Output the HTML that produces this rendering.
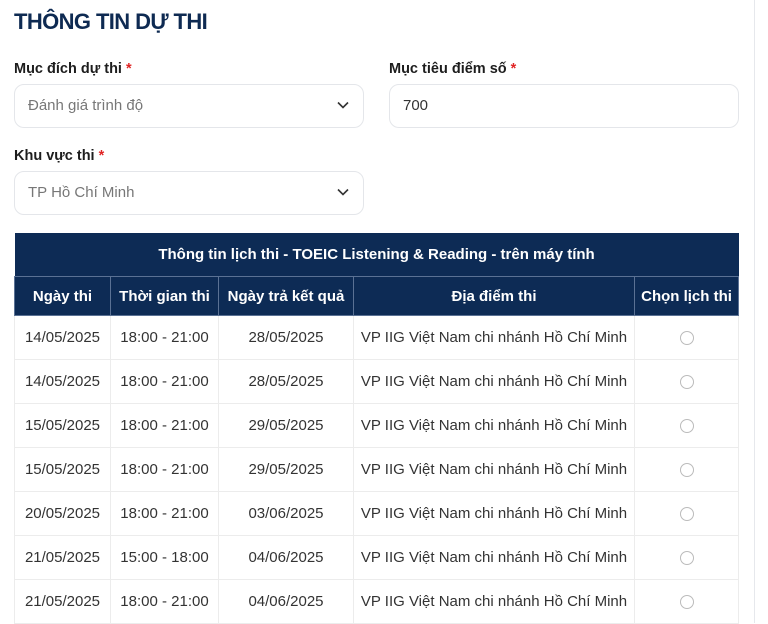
<!DOCTYPE html>
<html><head><meta charset="utf-8"><style>
body{margin:0;width:768px;height:623px;overflow:hidden;background:#fff;font-family:"Liberation Sans",sans-serif;position:relative}
.vl{position:absolute;left:754px;top:0;width:1px;height:623px;background:#e6e8ec}
h1{position:absolute;left:14px;top:9px;margin:0;font-size:22px;color:#0e2a52;font-weight:bold;letter-spacing:-0.6px}
.lab{position:absolute;font-size:14.5px;font-weight:bold;color:#1d1d1d}
.lab b{color:#e02424}
.inp{position:absolute;height:44px;border:1px solid #e4e6ea;border-radius:10px;box-sizing:border-box;font-size:15px;color:#777;padding:0 13px;line-height:42px}
.inp svg{position:absolute;right:14px;top:16px}
table{position:absolute;left:14px;top:233px;width:724px;border-collapse:collapse;font-size:15px;table-layout:fixed}
th{background:#0d2b55;color:#fff;font-weight:bold;height:38px;border:1px solid #5a7194;padding:0}
th.t{height:43px;border:none}
td{height:43px;border:1px solid #ececec;text-align:center;color:#333;padding:0;white-space:nowrap}
.r{display:inline-block;width:12px;height:12px;border:1px solid #bbb;border-radius:50%;vertical-align:middle}
</style></head><body>
<div class="vl"></div>
<h1>THÔNG TIN DỰ THI</h1>
<div class="lab" style="left:14px;top:61px">Mục đích dự thi <b>*</b></div>
<div class="lab" style="left:389px;top:61px">Mục tiêu điểm số <b>*</b></div>
<div class="inp" style="left:14px;top:84px;width:350px">Đánh giá trình độ<svg width="12" height="8" viewBox="0 0 12 8"><path d="M1 1.5l5 5 5-5" fill="none" stroke="#333" stroke-width="1.6"/></svg></div>
<div class="inp" style="left:389px;top:84px;width:350px;color:#333">700</div>
<div class="lab" style="left:14px;top:148px">Khu vực thi <b>*</b></div>
<div class="inp" style="left:14px;top:171px;width:350px">TP Hồ Chí Minh<svg width="12" height="8" viewBox="0 0 12 8"><path d="M1 1.5l5 5 5-5" fill="none" stroke="#333" stroke-width="1.6"/></svg></div>
<table>
<colgroup><col style="width:96px"><col style="width:108px"><col style="width:135px"><col style="width:281px"><col style="width:104px"></colgroup>
<tr><th class="t" colspan="5">Thông tin lịch thi - TOEIC Listening &amp; Reading - trên máy tính</th></tr>
<tr><th>Ngày thi</th><th>Thời gian thi</th><th>Ngày trả kết quả</th><th>Địa điểm thi</th><th>Chọn lịch thi</th></tr>
<tr><td>14/05/2025</td><td>18:00 - 21:00</td><td>28/05/2025</td><td>VP IIG Việt Nam chi nhánh Hồ Chí Minh</td><td><span class="r"></span></td></tr>
<tr><td>14/05/2025</td><td>18:00 - 21:00</td><td>28/05/2025</td><td>VP IIG Việt Nam chi nhánh Hồ Chí Minh</td><td><span class="r"></span></td></tr>
<tr><td>15/05/2025</td><td>18:00 - 21:00</td><td>29/05/2025</td><td>VP IIG Việt Nam chi nhánh Hồ Chí Minh</td><td><span class="r"></span></td></tr>
<tr><td>15/05/2025</td><td>18:00 - 21:00</td><td>29/05/2025</td><td>VP IIG Việt Nam chi nhánh Hồ Chí Minh</td><td><span class="r"></span></td></tr>
<tr><td>20/05/2025</td><td>18:00 - 21:00</td><td>03/06/2025</td><td>VP IIG Việt Nam chi nhánh Hồ Chí Minh</td><td><span class="r"></span></td></tr>
<tr><td>21/05/2025</td><td>15:00 - 18:00</td><td>04/06/2025</td><td>VP IIG Việt Nam chi nhánh Hồ Chí Minh</td><td><span class="r"></span></td></tr>
<tr><td>21/05/2025</td><td>18:00 - 21:00</td><td>04/06/2025</td><td>VP IIG Việt Nam chi nhánh Hồ Chí Minh</td><td><span class="r"></span></td></tr>
</table>
</body></html>
